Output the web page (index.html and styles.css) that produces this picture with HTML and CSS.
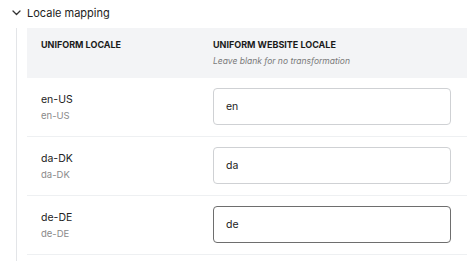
FILE: index.html
```html
<!DOCTYPE html>
<html lang="en">
<head>
  <meta charset="UTF-8" />
  <title>Locale mapping</title>
  <link rel="stylesheet" href="styles.css">
</head>
<body>
  <section class="group">
    <div class="group-title">
      <svg class="chevron" width="9" height="6" viewBox="0 0 9 6">
        <path d="M1 1l3.5 3.5L8 1" fill="none" stroke="#333" stroke-width="1.3" stroke-linecap="round" stroke-linejoin="round"/>
      </svg>
      <span>Locale mapping</span>
    </div>

    <div class="group-body">
      <div class="table">
        <div class="row head">
          <div class="col-a">
            <div class="th">UNIFORM LOCALE</div>
          </div>
          <div class="col-b">
            <div class="th">UNIFORM WEBSITE LOCALE</div>
            <div class="hint">Leave blank for no transformation</div>
          </div>
        </div>

        <div class="row">
          <div class="col-a">
            <div class="locale">en-US</div>
            <div class="locale-sub">en-US</div>
          </div>
          <div class="col-b">
            <input class="field" type="text" value="en" />
          </div>
        </div>

        <div class="row">
          <div class="col-a">
            <div class="locale">da-DK</div>
            <div class="locale-sub">da-DK</div>
          </div>
          <div class="col-b">
            <input class="field" type="text" value="da" />
          </div>
        </div>

        <div class="row">
          <div class="col-a">
            <div class="locale">de-DE</div>
            <div class="locale-sub">de-DE</div>
          </div>
          <div class="col-b">
            <input class="field active" type="text" value="de" />
          </div>
        </div>
      </div>
    </div>
  </section>
</body>
</html>
```

FILE: styles.css
```css
* {
  box-sizing: border-box;
}

body {
  margin: 0;
  background: #fff;
  color: #1f1f1f;
  font-family: "Inter", "Noto Sans", sans-serif;
}

.group-title {
  display: flex;
  align-items: center;
  gap: 6px;
  height: 28px;
  padding: 0 0 2px 12px;
  font-size: 11px;
  color: #222;
}

.group-body {
  margin-left: 16px;
  border-left: 1px solid #e3e5e8;
  padding: 0 7px 16px 10px;
}

.row {
  display: flex;
  border-bottom: 1px solid #eef0f2;
}

.row.head {
  background: #f3f4f6;
  border-bottom: none;
  height: 50px;
  padding-top: 11px;
}

.col-a {
  width: 172px;
  padding-left: 14px;
}

.col-b {
  flex: 1;
  padding-left: 14px;
  padding-right: 16px;
}

.th {
  font-size: 9px;
  font-weight: 700;
  color: #1a1a1a;
}

.hint {
  margin-top: 6px;
  font-size: 8.5px;
  font-style: italic;
  color: #7a7a7a;
}

.row:not(.head) {
  height: 59px;
  padding-top: 10px;
}

.locale {
  margin-top: 5px;
  font-size: 10.5px;
  color: #222;
}

.locale-sub {
  margin-top: 4px;
  font-size: 9.5px;
  color: #8a8a8a;
}

.field {
  display: block;
  width: 100%;
  height: 37px;
  padding: 0 12px;
  border: 1px solid #cfd1d4;
  border-radius: 4px;
  font-family: inherit;
  font-size: 10.5px;
  color: #222;
  background: #fff;
  outline: none;
}

.field.active {
  border-color: #6e6e6e;
}
```
